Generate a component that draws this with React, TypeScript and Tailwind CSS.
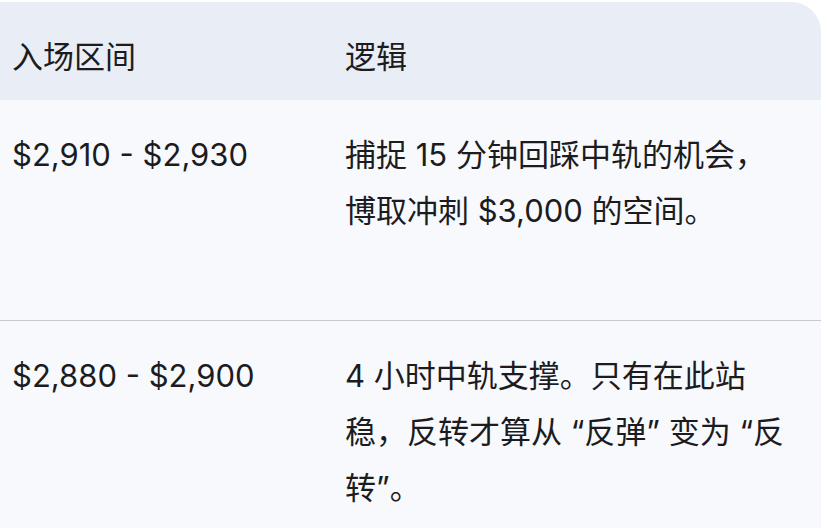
import React from "react";

const font = {
  fontFamily: '"Inter", "Noto Sans CJK SC", sans-serif',
};

export default function App() {
  return (
    <div className="w-[829px] h-[528px] bg-white overflow-hidden pt-[2px]" style={font}>
      <div className="w-[821px] rounded-tr-[30px] overflow-hidden bg-[#f7f9fd] text-[#1c1c1e]">
        <div className="flex h-[98px] items-center pt-[12px] bg-[#e9edf5] text-[31px]">
          <div className="w-[345px] pl-[12px]">入场区间</div>
          <div className="flex-1">逻辑</div>
        </div>
        <div className="flex h-[220px] pt-[27px] text-[31px] leading-[56px]">
          <div className="w-[345px] pl-[12px]">$2,910 - $2,930</div>
          <div className="flex-1 pr-[30px]">
            捕捉 15 分钟回踩中轨的机会，
            <br />
            博取冲刺 $3,000 的空间。
          </div>
        </div>
        <div className="h-px bg-[#c9cbd1]" />
        <div className="flex pt-[27px] pb-[20px] text-[31px] leading-[56px]">
          <div className="w-[345px] pl-[12px]">$2,880 - $2,900</div>
          <div className="flex-1 pr-[30px]">
            4 小时中轨支撑。只有在此站
            <br />
            稳，反转才算从 “反弹” 变为 “反
            <br />
            转”。
          </div>
        </div>
      </div>
    </div>
  );
}
